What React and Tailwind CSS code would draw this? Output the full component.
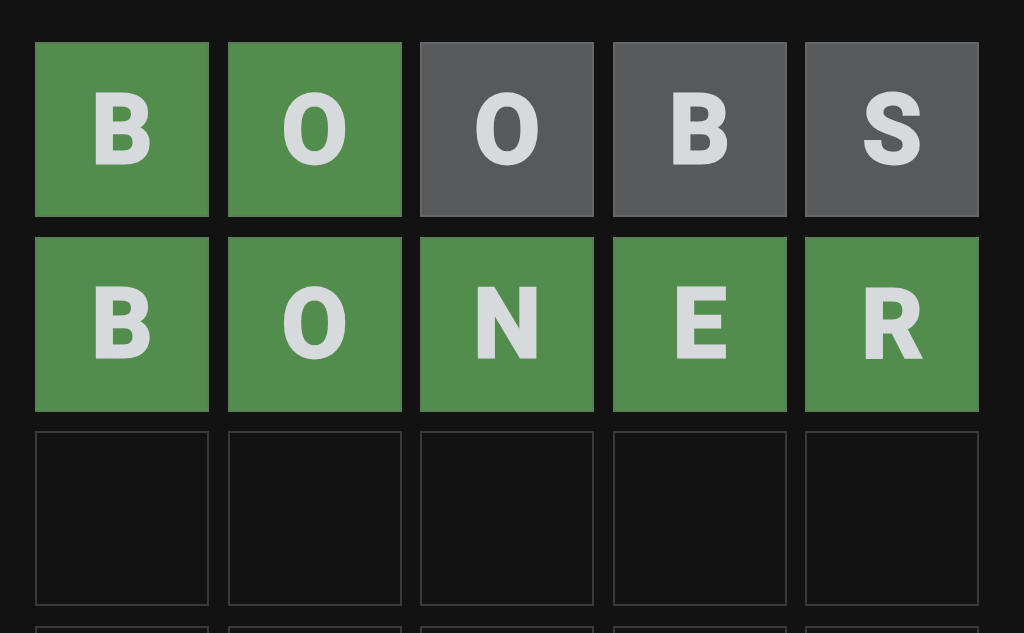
const ROWS = [
  [
    { ch: 'B', state: 'correct' },
    { ch: 'O', state: 'correct' },
    { ch: 'O', state: 'absent' },
    { ch: 'B', state: 'absent' },
    { ch: 'S', state: 'absent' },
  ],
  [
    { ch: 'B', state: 'correct' },
    { ch: 'O', state: 'correct' },
    { ch: 'N', state: 'correct' },
    { ch: 'E', state: 'correct' },
    { ch: 'R', state: 'correct' },
  ],
  [null, null, null, null, null],
  [null, null, null, null, null],
];

const tileStyles = {
  correct: 'bg-[#538d4e] border-[#5a7f57]',
  absent: 'bg-[#58595b] border-[#66676a]',
  empty: 'bg-[#121213] border-[#3a3a3c]',
};

function Tile({ tile }) {
  const state = tile ? tile.state : 'empty';
  return (
    <div
      className={`w-[174px] h-[175px] border-2 flex items-center justify-center ${tileStyles[state]}`}
    >
      {tile && (
        <span className="text-[96px] leading-none font-bold text-[#d7dadc] [-webkit-text-stroke:3px_#d7dadc] font-['Roboto','Liberation_Sans',sans-serif]">
          {tile.ch}
        </span>
      )}
    </div>
  );
}

export default function App() {
  return (
    <div className="w-[1024px] h-[633px] overflow-hidden bg-[#121213]">
      <div className="pt-[42px] pl-[35px] grid grid-cols-[repeat(5,174px)] gap-x-[18.5px] gap-y-[19.5px]">
        {ROWS.map((row, r) =>
          row.map((tile, c) => <Tile key={`${r}-${c}`} tile={tile} />)
        )}
      </div>
    </div>
  );
}
